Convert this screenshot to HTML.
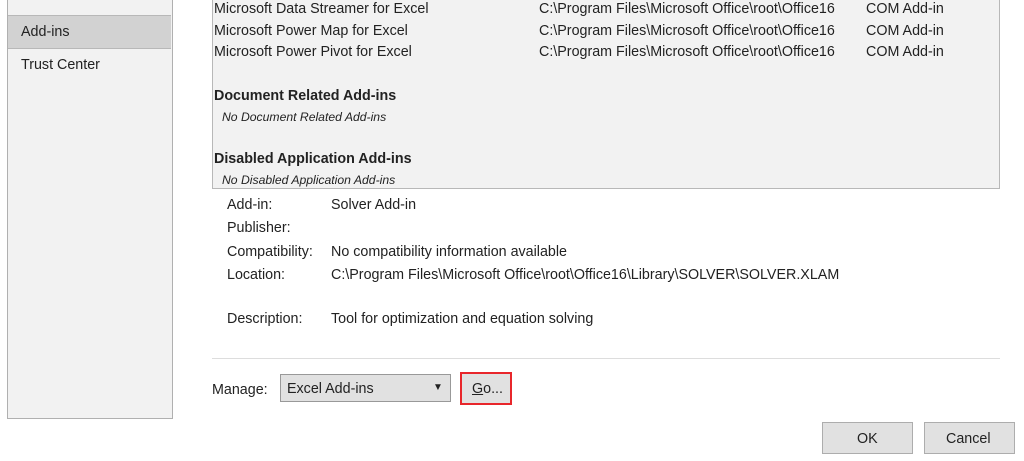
<!DOCTYPE html>
<html><head><style>
body{margin:0;width:1024px;height:461px;background:#fff;position:relative;overflow:hidden;font-family:"Liberation Sans",sans-serif;font-size:14.3px;color:#222}
.a{position:absolute;white-space:nowrap}
#side{left:7px;top:-1px;width:164px;height:418px;background:#f2f2f2;border:1px solid #b0b0b0}
#sel{left:8px;top:15px;width:163px;height:32px;background:#d2d2d2;border-top:1px solid #b8b8b8;border-bottom:1px solid #b8b8b8}
#list{left:212px;top:-1px;width:786px;height:188px;background:#f2f2f2;border:1px solid #b8b8b8}
b{font-weight:bold;font-size:14.3px}
i{font-size:12.2px}
.btn{background:#e1e1e1;border:1px solid #adadad;text-align:center}
</style></head><body>
<div class="a" id="side"></div>
<div class="a" id="sel"></div>
<div class="a" style="left:21px;top:24px">Add-ins</div>
<div class="a" style="left:21px;top:57px">Trust Center</div>
<div class="a" id="list"></div>
<div class="a" style="left:214px;top:1px">Microsoft Data Streamer for Excel</div>
<div class="a" style="left:214px;top:23px">Microsoft Power Map for Excel</div>
<div class="a" style="left:214px;top:44px">Microsoft Power Pivot for Excel</div>
<div class="a" style="left:539px;top:1px">C:\Program Files\Microsoft Office\root\Office16</div>
<div class="a" style="left:539px;top:23px">C:\Program Files\Microsoft Office\root\Office16</div>
<div class="a" style="left:539px;top:44px">C:\Program Files\Microsoft Office\root\Office16</div>
<div class="a" style="left:866px;top:1px">COM Add-in</div>
<div class="a" style="left:866px;top:23px">COM Add-in</div>
<div class="a" style="left:866px;top:44px">COM Add-in</div>
<div class="a" style="left:214px;top:88px"><b>Document Related Add-ins</b></div>
<div class="a" style="left:222px;top:109px"><i>No Document Related Add-ins</i></div>
<div class="a" style="left:214px;top:151px"><b>Disabled Application Add-ins</b></div>
<div class="a" style="left:222px;top:172px"><i>No Disabled Application Add-ins</i></div>
<div class="a" style="left:227px;top:197px">Add-in:</div>
<div class="a" style="left:331px;top:197px">Solver Add-in</div>
<div class="a" style="left:227px;top:220px">Publisher:</div>
<div class="a" style="left:227px;top:244px">Compatibility:</div>
<div class="a" style="left:331px;top:244px">No compatibility information available</div>
<div class="a" style="left:227px;top:267px">Location:</div>
<div class="a" style="left:331px;top:267px">C:\Program Files\Microsoft Office\root\Office16\Library\SOLVER\SOLVER.XLAM</div>
<div class="a" style="left:227px;top:311px">Description:</div>
<div class="a" style="left:331px;top:311px">Tool for optimization and equation solving</div>
<div class="a" style="left:212px;top:358px;width:788px;height:1px;background:#ddd"></div>
<div class="a" style="left:212px;top:382px">Manage:</div>
<div class="a btn" style="left:280px;top:374px;width:169px;height:26px;border-color:#999"></div>
<div class="a" style="left:287px;top:381px">Excel Add-ins</div>
<div class="a" style="left:433px;top:382px;font-size:10px">▼</div>
<div class="a" style="left:460px;top:372px;width:48px;height:29px;border:2px solid #e8262b;background:#e1e1e1"></div>
<div class="a" style="left:472px;top:381px"><u>G</u>o...</div>
<div class="a btn" style="left:822px;top:422px;width:89px;height:30px"></div>
<div class="a" style="left:857px;top:431px">OK</div>
<div class="a btn" style="left:924px;top:422px;width:89px;height:30px"></div>
<div class="a" style="left:946px;top:431px">Cancel</div>
</body></html>
